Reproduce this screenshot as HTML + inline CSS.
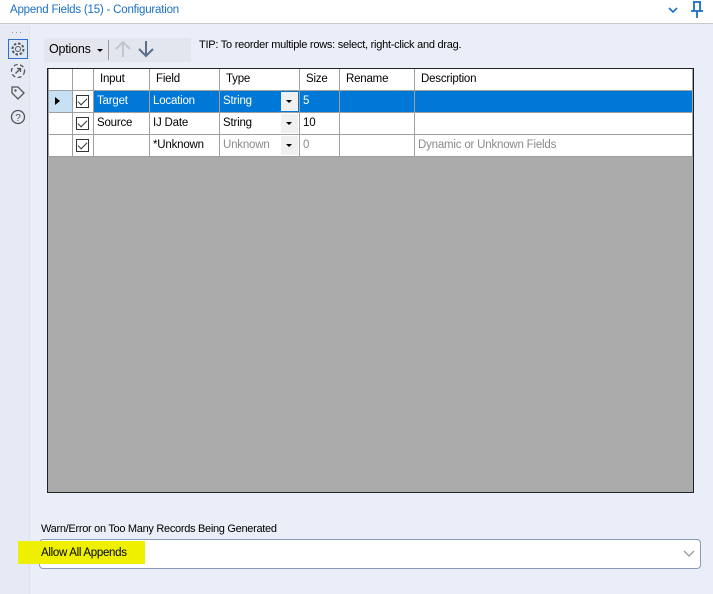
<!DOCTYPE html>
<html><head><meta charset="utf-8"><style>
*{box-sizing:border-box;margin:0;padding:0}
body{width:713px;height:594px;overflow:hidden;background:#eaeef8;font-family:"Liberation Sans",sans-serif;font-size:12px;color:#000;position:relative}
.abs{position:absolute}
.hdr{left:0;top:0;width:713px;height:24px;background:#fff;border-bottom:1px solid #c8c8c8}
.side{left:0;top:25px;width:30px;height:569px;background:#e6eaf5;border-right:1px solid #dde2ee}
.grid{left:47px;top:68px;width:647px;height:425px;background:#ababab;border:1px solid #222}
table{border-collapse:collapse;background:#fff;width:645px;table-layout:fixed}
td{border:1px solid #a0a0a0;height:22px;padding:0 3px;white-space:nowrap;overflow:hidden;font-size:11.5px;position:relative;letter-spacing:-0.2px}
tr.h td{height:21px;border-top:none}
tr.sel td{background:#0078d7;color:#fff}
.cb{width:13px;height:13px;border:1px solid #333;background:#fff;display:inline-block;vertical-align:middle;position:relative}
.cb:after{content:"";position:absolute;left:3px;top:0px;width:4px;height:8px;border:solid #333;border-width:0 1.5px 1.5px 0;transform:rotate(45deg)}
.dd{position:absolute;right:1px;top:1px;width:17px;height:19px;background:#f0f0f0}
.dd:after{content:"";position:absolute;left:5px;top:8px;border-left:3px solid transparent;border-right:3px solid transparent;border-top:3px solid #000}
.gray{color:#8a8a8a}
</style></head><body>
<div class="abs hdr"><span class="abs" style="left:10px;top:4px;color:#1a6fc4;font-size:11.5px;letter-spacing:-0.2px">Append Fields (15) - Configuration</span>
<svg class="abs" style="left:666px;top:5px" width="14" height="10"><path d="M3 3 L7 7 L11 3" stroke="#1a6fc4" stroke-width="1.6" fill="none"/></svg>
<svg class="abs" style="left:690px;top:1px" width="14" height="20"><path d="M3 1 H11 M4 1 V10 M10 1 V10 M1 10 H13 M7 10 V17" stroke="#1a6fc4" stroke-width="1.8" fill="none"/></svg>
</div>
<div class="abs side">
<div class="abs" style="left:11px;top:2px;color:#888;font-size:9px;letter-spacing:1px">···</div>
<div class="abs" style="left:8px;top:14px;width:20px;height:20px;border:1px solid #2c6fcf;background:#dfe6f5"></div>
<svg class="abs" style="left:10px;top:16px" width="16" height="16"><circle cx="8" cy="8" r="2.5" stroke="#555" fill="none"/><circle cx="8" cy="8" r="5.5" stroke="#555" stroke-dasharray="2.5 1.8" stroke-width="2" fill="none"/></svg>
<svg class="abs" style="left:10px;top:38px" width="16" height="16"><circle cx="8" cy="8" r="6.5" stroke="#555" stroke-dasharray="4 2.5" stroke-width="1.3" fill="none"/><path d="M5.5 10.5 L10.5 5.5 M7 5.5 H10.5 V9" stroke="#555" stroke-width="1.3" fill="none"/></svg>
<svg class="abs" style="left:10px;top:60px" width="16" height="16"><path d="M2 2 H8 L14 8 L8 14 L2 8 Z" stroke="#555" stroke-width="1.3" fill="none"/><circle cx="5.5" cy="5.5" r="1.2" fill="#555"/></svg>
<svg class="abs" style="left:10px;top:84px" width="16" height="16"><circle cx="8" cy="8" r="6.5" stroke="#555" stroke-width="1.3" fill="none"/><text x="8" y="12" font-size="10" text-anchor="middle" fill="#555" font-family="Liberation Sans">?</text></svg>
</div>
<div class="abs" style="left:44px;top:38px;width:147px;height:24px;background:#e3e6ee"></div>
<span class="abs" style="left:49px;top:42px;font-size:12.5px;letter-spacing:-0.2px">Options</span>
<div class="abs" style="left:97px;top:49px;border-left:3px solid transparent;border-right:3px solid transparent;border-top:3px solid #000"></div>
<div class="abs" style="left:108px;top:40px;width:1px;height:20px;background:#999"></div>
<svg class="abs" style="left:114px;top:40px" width="18" height="18"><path d="M9 2 V17 M2 9 L9 2 L16 9" stroke="#c0c4cc" stroke-width="2" fill="none"/></svg>
<svg class="abs" style="left:137px;top:40px" width="18" height="18"><path d="M9 1 V16 M2 9 L9 16 L16 9" stroke="#5a6f8c" stroke-width="2" fill="none"/></svg>
<span class="abs" style="left:199px;top:39px;font-size:11px;letter-spacing:-0.25px">TIP: To reorder multiple rows: select, right-click and drag.</span>
<div class="abs grid">
<table>
<colgroup><col style="width:24px"><col style="width:21px"><col style="width:56px"><col style="width:70px"><col style="width:80px"><col style="width:40px"><col style="width:75px"><col></colgroup>
<tr class="h"><td></td><td></td><td>&nbsp;Input</td><td>&nbsp;Field</td><td>&nbsp;Type</td><td style="padding-left:6px">Size</td><td>&nbsp;Rename</td><td>&nbsp;Description</td></tr>
<tr class="sel"><td style="background:#c8e0f4"><div style="position:absolute;left:6px;top:6px;border-top:4px solid transparent;border-bottom:4px solid transparent;border-left:5px solid #000"></div></td><td style="background:#fff"><span class="cb"></span></td><td>Target</td><td>Location</td><td>String<span class="dd"></span></td><td>5</td><td></td><td></td></tr>
<tr><td></td><td><span class="cb"></span></td><td>Source</td><td>IJ Date</td><td>String<span class="dd"></span></td><td>10</td><td></td><td></td></tr>
<tr><td></td><td><span class="cb"></span></td><td></td><td>*Unknown</td><td class="gray">Unknown<span class="dd"></span></td><td class="gray">0</td><td></td><td class="gray">Dynamic or Unknown Fields</td></tr>
</table>
</div>
<span class="abs" style="left:41px;top:523px;font-size:11px;letter-spacing:-0.3px">Warn/Error on Too Many Records Being Generated</span>
<div class="abs" style="left:39px;top:539px;width:662px;height:30px;background:#fff;border:1px solid #8a9ab8;border-radius:4px"></div>
<div class="abs" style="left:18px;top:541px;width:127px;height:23px;background:#eef000"></div>
<span class="abs" style="left:41px;top:547px;font-size:11.5px;letter-spacing:-0.3px">Allow All Appends</span>
<svg class="abs" style="left:683px;top:550px" width="12" height="8"><path d="M1 1 L6 6 L11 1" stroke="#999" stroke-width="1.3" fill="none"/></svg>
</body></html>
